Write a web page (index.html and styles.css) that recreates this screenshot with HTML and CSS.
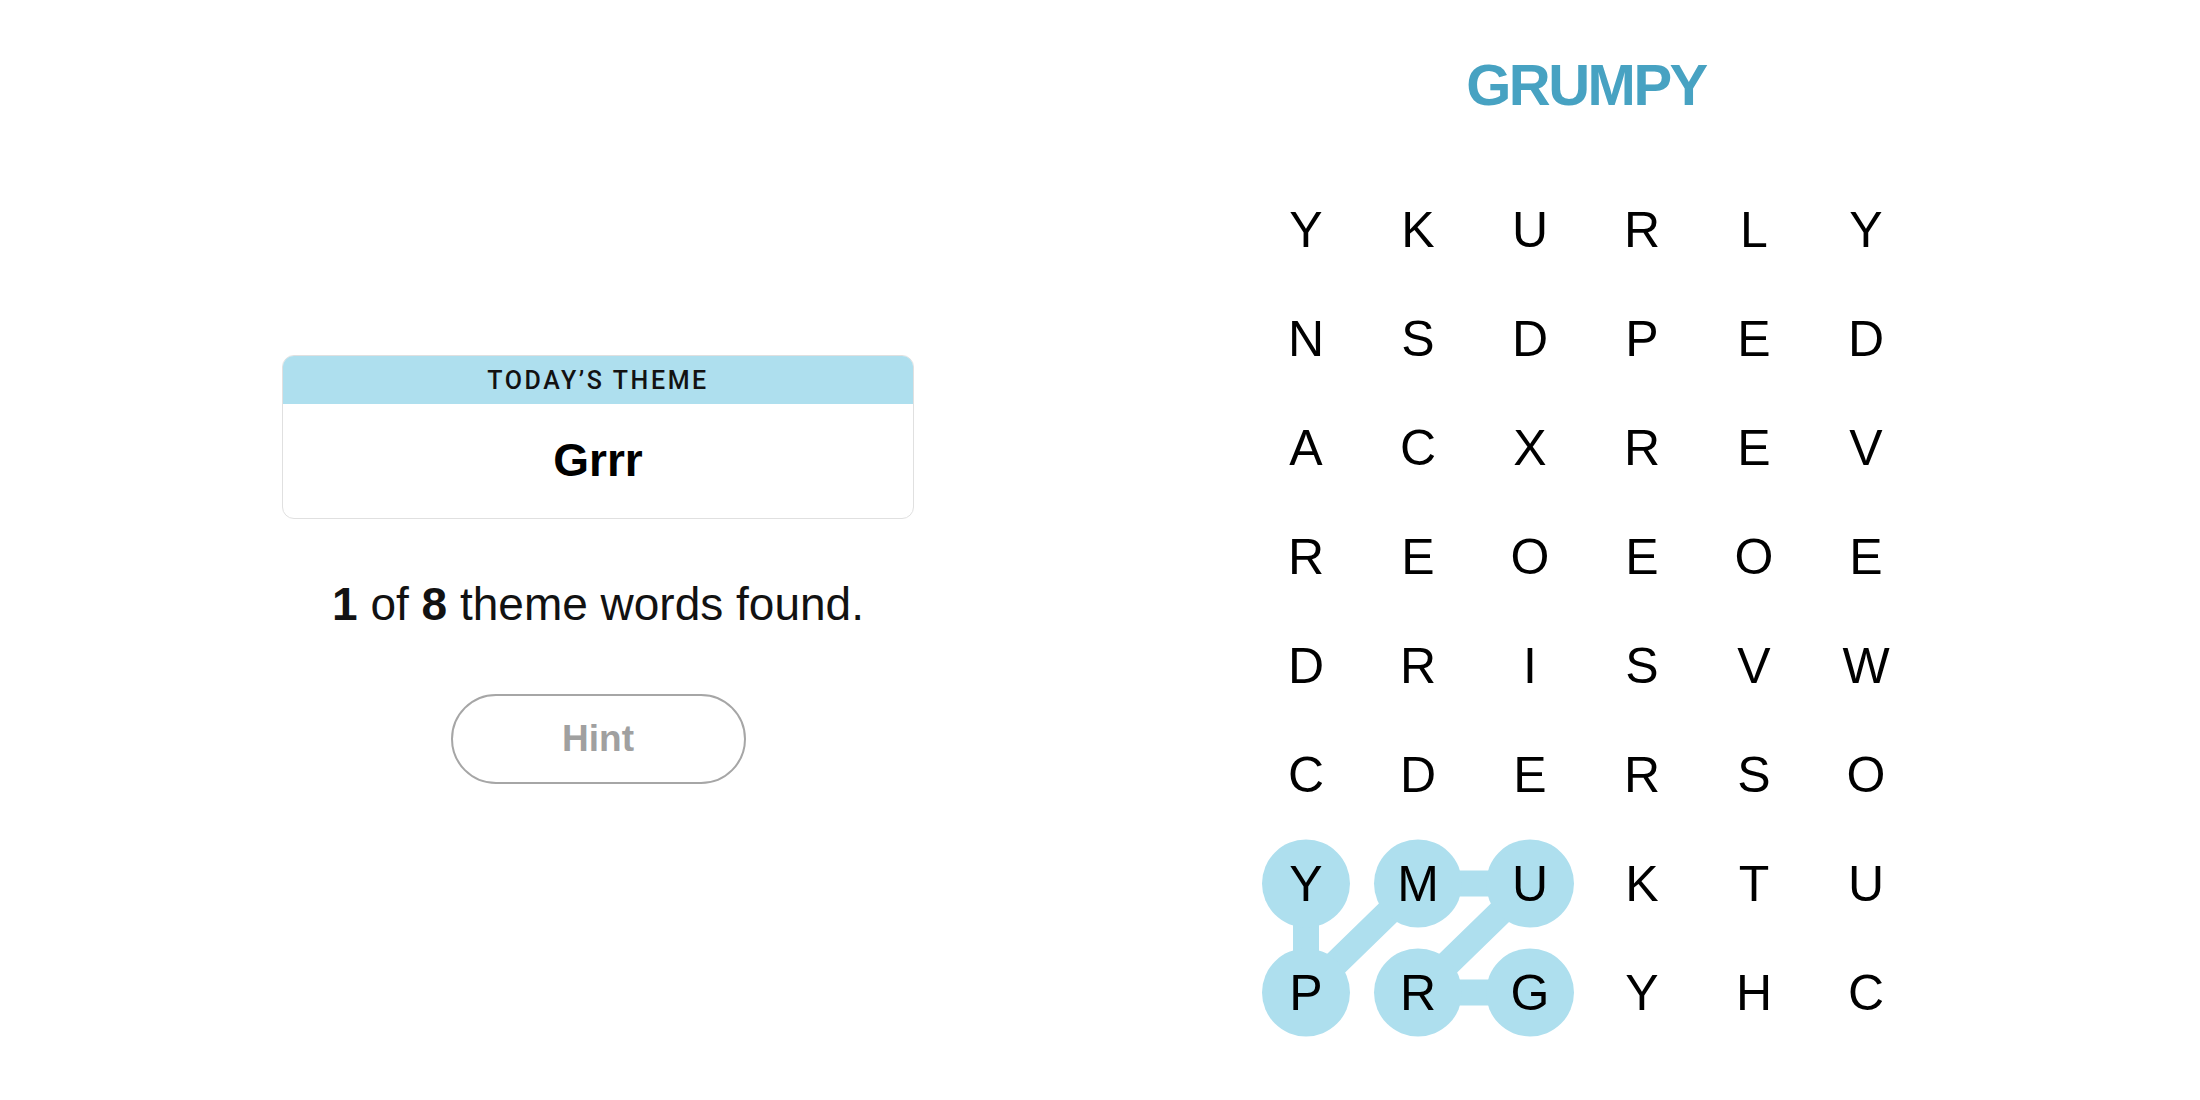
FILE: index.html
```html
<!DOCTYPE html>
<html>
<head>
  <title>Strands - Grrr</title>
  <link rel="stylesheet" href="styles.css">
</head>
<body>

  <div class="game">

    <div class="side">
      <div class="theme-card">
        <div class="theme-label">TODAY’S THEME</div>
        <div class="theme-name">Grrr</div>
      </div>
      <p class="progress"><b>1</b> of <b>8</b> theme words found.</p>
      <button class="hint-btn" disabled>Hint</button>
    </div>

    <div class="board">
      <h2 class="found-word">GRUMPY</h2>

      <div class="grid">
        <svg class="trail" width="672" height="872" viewBox="0 0 672 872">
          <polyline points="56,708.5 56,817.5 168,708.5 280,708.5 168,817.5 280,817.5" />
          <circle cx="56" cy="708.5" r="44" />
          <circle cx="168" cy="708.5" r="44" />
          <circle cx="280" cy="708.5" r="44" />
          <circle cx="56" cy="817.5" r="44" />
          <circle cx="168" cy="817.5" r="44" />
          <circle cx="280" cy="817.5" r="44" />
        </svg>

        <span>Y</span><span>K</span><span>U</span><span>R</span><span>L</span><span>Y</span>
        <span>N</span><span>S</span><span>D</span><span>P</span><span>E</span><span>D</span>
        <span>A</span><span>C</span><span>X</span><span>R</span><span>E</span><span>V</span>
        <span>R</span><span>E</span><span>O</span><span>E</span><span>O</span><span>E</span>
        <span>D</span><span>R</span><span>I</span><span>S</span><span>V</span><span>W</span>
        <span>C</span><span>D</span><span>E</span><span>R</span><span>S</span><span>O</span>
        <span>Y</span><span>M</span><span>U</span><span>K</span><span>T</span><span>U</span>
        <span>P</span><span>R</span><span>G</span><span>Y</span><span>H</span><span>C</span>
      </div>
    </div>

  </div>

</body>
</html>
```

FILE: styles.css
```css
body {
  margin: 0;
  background: #ffffff;
  font-family: "Liberation Sans", Arial, sans-serif;
  color: #121212;
}

.game {
  display: flex;
  align-items: flex-start;
  gap: 336px;
  padding-left: 282px;
  height: 1100px;
  box-sizing: border-box;
}

/* left column */

.side {
  width: 632px;
  padding-top: 355px;
  display: flex;
  flex-direction: column;
  align-items: center;
}

.theme-card {
  width: 100%;
  border: 1px solid #e0e0e0;
  border-radius: 12px;
  overflow: hidden;
  box-sizing: border-box;
  text-align: center;
}

.theme-label {
  background: #aedfee;
  height: 48px;
  line-height: 50px;
  font-family: Roboto, "Liberation Sans", sans-serif;
  font-size: 25px;
  font-weight: 500;
  letter-spacing: 2.6px;
  color: #121212;
}

.theme-name {
  height: 114px;
  line-height: 112px;
  font-size: 46px;
  font-weight: 700;
  color: #000;
}

.progress {
  margin: 57px 0 0;
  font-size: 46px;
  line-height: 56px;
  color: #121212;
}

.progress b {
  font-weight: 700;
}

.hint-btn {
  margin-top: 62px;
  width: 295px;
  height: 90px;
  border: 2px solid #a6a6a6;
  border-radius: 45px;
  background: #fff;
  font-family: "Liberation Sans", Arial, sans-serif;
  font-size: 37px;
  font-weight: 700;
  color: #a0a0a0;
}

/* right column */

.board {
  width: 672px;
  display: flex;
  flex-direction: column;
  align-items: center;
}

.found-word {
  margin: 50px 0 0;
  height: 70px;
  line-height: 70px;
  font-size: 58px;
  font-weight: 700;
  letter-spacing: -2.5px;
  color: #47a2c2;
}

.grid {
  position: relative;
  margin-top: 55px;
  display: grid;
  grid-template-columns: repeat(6, 112px);
  grid-auto-rows: 109px;
}

.grid span {
  position: relative;
  z-index: 1;
  display: flex;
  align-items: center;
  justify-content: center;
  font-size: 50px;
  line-height: 1;
  color: #000;
}

.trail {
  position: absolute;
  top: 0;
  left: 0;
  z-index: 0;
}

.trail polyline {
  fill: none;
  stroke: #aedfee;
  stroke-width: 26;
  stroke-linejoin: round;
}

.trail circle {
  fill: #aedfee;
}
```
